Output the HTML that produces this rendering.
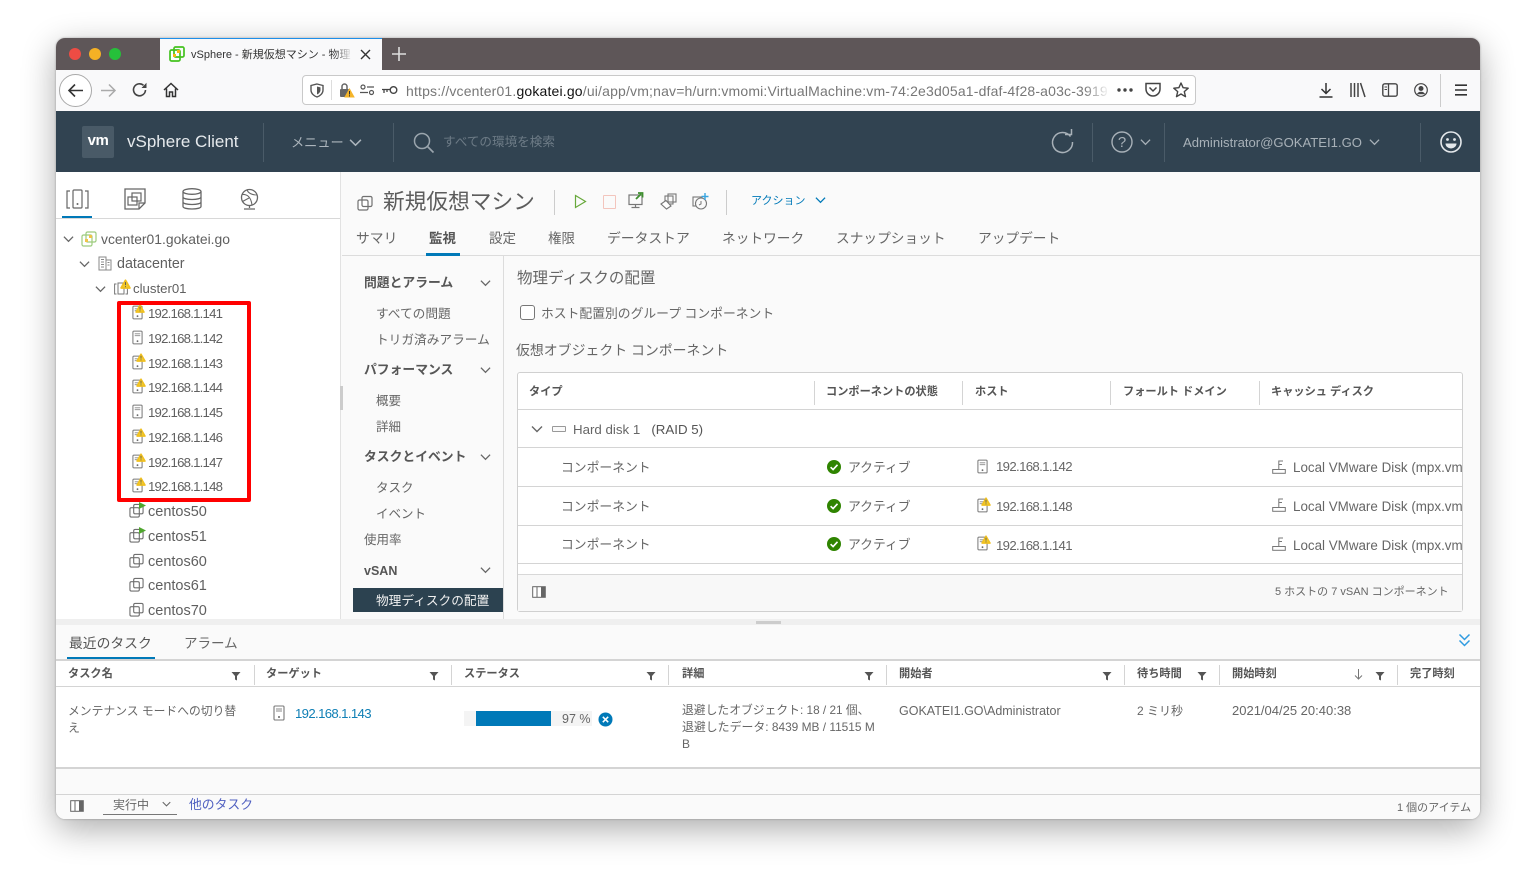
<!DOCTYPE html>
<html lang="ja"><head><meta charset="utf-8"><title>vSphere</title>
<style>
html,body{margin:0;padding:0;width:1536px;height:893px;overflow:hidden;background:#fff}
body{position:relative;font-family:"Liberation Sans","Noto Sans CJK JP",sans-serif;color:#565656;font-size:13px}
.a{position:absolute}
.t{position:absolute;white-space:nowrap;line-height:20px;height:20px;margin-top:1px}
.b{font-weight:700}
svg{position:absolute;overflow:visible}
.ic{fill:none;stroke:#666;stroke-width:1.2}
#win{position:absolute;left:56px;top:38px;width:1424px;height:781px;border-radius:9px;box-shadow:0 10px 34px rgba(0,0,0,.33),0 0 2px rgba(0,0,0,.3);overflow:hidden;background:#fafafa}
.ln{position:absolute;background:#d4d4d4}
.tree{font-size:13px;color:#5f5f5f}
.ip{letter-spacing:-.78px;font-size:13.2px}
.cn{font-size:14.5px}
.th{font-size:11.2px;font-weight:700;color:#555}
.ms{font-size:13px;color:#666}
.tip{letter-spacing:-.65px;font-size:13.2px}
.dk{font-size:13.4px}
</style></head><body>
<svg width="0" height="0" style="position:absolute"><defs>
<symbol id="host" viewBox="0 0 12 16"><rect x="1" y="1" width="10" height="14" rx="1" fill="#fff" stroke="#777" stroke-width="1.1"/><path d="M3 4h6M3 6h6" stroke="#888" stroke-width="1"/><circle cx="6" cy="12" r="1" fill="#666"/></symbol>
<symbol id="warn" viewBox="0 0 12 11"><path d="M6 1.500L10.800 9.800H1.200Z" fill="#f3cb2e" stroke="#f0c020" stroke-width="2" stroke-linejoin="round"/><path d="M6 3.400v3.400M6 7.800v1.200" stroke="#555" stroke-width="1"/></symbol>
<symbol id="vm" viewBox="0 0 16 16"><rect x="1" y="5" width="10" height="10" rx="1.500" fill="#fff" stroke="#707070" stroke-width="1.200"/><rect x="5" y="1.500" width="10" height="10" rx="1.500" fill="none" stroke="#707070" stroke-width="1.200"/></symbol>
<symbol id="chev" viewBox="0 0 12 8"><path d="M1 1.500L6 6.500L11 1.500" fill="none" stroke="currentColor" stroke-width="1.400"/></symbol>
<symbol id="filt" viewBox="0 0 10 10"><path d="M0.500 1H9.500L6 5V9.500L4 8.500V5Z" fill="#555"/></symbol>
<symbol id="ok" viewBox="0 0 14 14"><circle cx="7" cy="7" r="7" fill="#2f8400"/><path d="M3.600 7.200L6.100 9.600L10.500 4.800" fill="none" stroke="#fff" stroke-width="1.600"/></symbol>
<symbol id="disk" viewBox="0 0 14 15"><path d="M.7 10.500H6.800V2H11M6.800 5.500H10" fill="none" stroke="#777" stroke-width="1"/><rect x=".7" y="10.500" width="12.600" height="3.800" fill="#fff" stroke="#777"/></symbol>
<symbol id="cols" viewBox="0 0 14 12"><rect x=".7" y=".7" width="12.600" height="10.600" fill="#fff" stroke="#666"/><path d="M5 1v10" stroke="#666"/><rect x="9" y="1" width="4" height="10" fill="#666"/></symbol>
</defs></svg>

<div id="win">
<!-- title bar -->
<div class="a" style="left:0;top:0;width:1424px;height:32px;background:#5e5658"></div>
<div class="a" style="left:13px;top:10px;width:12px;height:12px;border-radius:50%;background:#ed4c44"></div>
<div class="a" style="left:33px;top:10px;width:12px;height:12px;border-radius:50%;background:#f5b125"></div>
<div class="a" style="left:53px;top:10px;width:12px;height:12px;border-radius:50%;background:#26c03a"></div>
<div class="a" style="left:104px;top:0;width:222px;height:32px;background:#f9f9fa;border-top:1px solid #1e8ee8;box-sizing:border-box"></div>
<svg style="left:113px;top:8px" width="16" height="16" viewBox="0 0 16 16"><rect x="1" y="4" width="10" height="11" rx="1.500" fill="#fff" stroke="#44c21f" stroke-width="1.700"/><rect x="5" y="1" width="10" height="10" rx="1.500" fill="none" stroke="#44c21f" stroke-width="1.700"/><rect x="4" y="8" width="3" height="3" fill="#f4b516"/><rect x="8" y="4" width="3" height="3" fill="#f4b516"/></svg>
<div class="t" style="left:135px;top:6px;font-size:11px;color:#333;width:162px;overflow:hidden">vSphere - 新規仮想マシン - 物理</div>
<div class="a" style="left:277px;top:6px;width:20px;height:20px;background:linear-gradient(90deg,rgba(249,249,250,0),#f9f9fa)"></div>
<svg style="left:304px;top:11px" width="11" height="11"><path d="M1 1L10 10M10 1L1 10" stroke="#333" stroke-width="1.400"/></svg>
<svg style="left:336px;top:9px" width="14" height="14"><path d="M7 0V14M0 7H14" stroke="#ddd" stroke-width="1.600"/></svg>
<!-- toolbar -->
<div class="a" style="left:0;top:32px;width:1424px;height:41px;background:#f9f9fa"></div>
<div class="a" style="left:3px;top:36px;width:33px;height:33px;border-radius:50%;background:#fff;border:1px solid #a9a9a9;box-sizing:border-box"></div>
<svg style="left:11px;top:45px" width="17" height="15"><path d="M16 7.500H2M8 1.500L2 7.500L8 13.500" fill="none" stroke="#333" stroke-width="1.600"/></svg>
<svg style="left:44px;top:45px" width="17" height="15"><path d="M1 7.500H15M9 1.500L15 7.500L9 13.500" fill="none" stroke="#aaa" stroke-width="1.500"/></svg>
<svg style="left:76px;top:44px" width="16" height="16"><path d="M13.500 8A6 6 0 1 1 11.500 3.300" fill="none" stroke="#444" stroke-width="1.600"/><path d="M14.500 .8V6H9.500Z" fill="#444"/></svg>
<svg style="left:107px;top:44px" width="16" height="16"><path d="M1 8L8 1.500L15 8M3.500 6.500V14.500H6.500V10H9.500V14.500H12.500V6.500" fill="none" stroke="#333" stroke-width="1.500"/></svg>
<div class="a" style="left:246px;top:37px;width:894px;height:30px;background:#fff;border:1px solid #c9c9c9;border-radius:4px;box-sizing:border-box"></div>
<svg style="left:254px;top:45px" width="14" height="15"><path d="M7 1L13 2.500V7C13 10.500 10 13 7 14C4 13 1 10.500 1 7V2.500Z" fill="none" stroke="#555" stroke-width="1.400"/><path d="M7 3.500L10.500 4.400V7C10.500 9 9 10.600 7 11.500Z" fill="#555"/></svg>
<div class="a" style="left:275px;top:42px;width:1px;height:20px;background:#ddd"></div>
<svg style="left:283px;top:44px" width="16" height="16"><rect x="1" y="7" width="9" height="8" rx="1" fill="#666"/><path d="M3 7V4.500A2.500 2.500 0 0 1 8 4.500V7" fill="none" stroke="#666" stroke-width="1.500"/><path d="M10.500 6L15.800 15.500H5.200Z" fill="#f5b52a"/><path d="M10.500 9V12.500M10.500 13.200V14.500" stroke="#333"/></svg>
<svg style="left:304px;top:46px" width="14" height="12"><circle cx="3" cy="3" r="2" fill="none" stroke="#555" stroke-width="1.200"/><path d="M7 3H14M0 8.500H8" stroke="#555" stroke-width="1.300"/><circle cx="11.500" cy="8.500" r="2" fill="none" stroke="#555" stroke-width="1.200"/></svg>
<svg style="left:326px;top:47px" width="16" height="10"><circle cx="11.500" cy="5" r="3.300" fill="none" stroke="#444" stroke-width="1.400"/><path d="M0 4.500H8M2 4.500V8M5 4.500V7" stroke="#444" stroke-width="1.300"/></svg>
<div class="t" style="left:350px;top:43px;margin-top:0;font-size:14px;color:#777;width:703px;overflow:hidden;letter-spacing:.17px">https://vcenter01.<span style="color:#111">gokatei.go</span>/ui/app/vm;nav=h/urn:vmomi:VirtualMachine:vm-74:2e3d05a1-dfaf-4f28-a03c-3919</div>
<div class="a" style="left:1028px;top:43px;width:26px;height:20px;background:linear-gradient(90deg,rgba(255,255,255,0),#fff)"></div>
<svg style="left:1061px;top:50px" width="16" height="4"><circle cx="2" cy="2" r="1.700" fill="#444"/><circle cx="8" cy="2" r="1.700" fill="#444"/><circle cx="14" cy="2" r="1.700" fill="#444"/></svg>
<svg style="left:1089px;top:44px" width="16" height="16"><path d="M1 1.500H15V7A7 7 0 0 1 1 7Z" fill="none" stroke="#444" stroke-width="1.500"/><path d="M4.500 5.500L8 9L11.500 5.500" fill="none" stroke="#444" stroke-width="1.500"/></svg>
<svg style="left:1117px;top:44px" width="16" height="16"><path d="M8 1L10.100 5.700L15.200 6.200L11.300 9.600L12.500 14.700L8 12L3.500 14.700L4.700 9.600L.8 6.200L5.900 5.700Z" fill="none" stroke="#444" stroke-width="1.400" stroke-linejoin="round"/></svg>
<svg style="left:1262px;top:44px" width="16" height="16"><path d="M8 1V11M3.500 7L8 11.500L12.500 7M1.500 15H14.500" fill="none" stroke="#333" stroke-width="1.500"/></svg>
<svg style="left:1294px;top:45px" width="16" height="14"><path d="M1 0V14M4.500 0V14M8 0V14M10.500 0L15 14" stroke="#444" stroke-width="1.500"/></svg>
<svg style="left:1326px;top:45px" width="16" height="14"><rect x=".8" y=".8" width="14.400" height="12.400" rx="2" fill="none" stroke="#444" stroke-width="1.400"/><path d="M6.500 1V13" stroke="#444" stroke-width="1.300"/><path d="M2.500 4H5M2.500 6.500H5" stroke="#444"/></svg>
<svg style="left:1358px;top:45px" width="14" height="14"><circle cx="7" cy="7" r="6.300" fill="none" stroke="#444" stroke-width="1.200"/><circle cx="7" cy="5.500" r="2.500" fill="#444"/><path d="M2.800 11.300A4.500 4 0 0 1 11.200 11.300" fill="#444"/></svg>
<div class="a" style="left:1384px;top:36px;width:1px;height:33px;background:#ccc"></div>
<svg style="left:1399px;top:46px" width="12" height="12"><path d="M0 1.200H12M0 6H12M0 10.800H12" stroke="#333" stroke-width="1.600"/></svg>
<!-- header -->
<div class="a" style="left:0;top:73px;width:1424px;height:61px;background:#314351"></div>
<div class="a" style="left:26px;top:88px;width:32px;height:32px;border-radius:2px;background:#495a67"></div>
<div class="t b" style="left:26px;top:92px;width:32px;text-align:center;color:#fff;font-size:15px;letter-spacing:-.5px">vm</div>
<div class="t" style="left:71px;top:93px;font-size:17px;color:#e5e9ec">vSphere Client</div>
<div class="a" style="left:207px;top:85px;width:1px;height:39px;background:#4a5b68"></div>
<div class="t" style="left:235px;top:94px;font-size:13.200px;color:#acb5bc">メニュー</div>
<svg style="left:293px;top:100px;color:#acb5bc" width="13" height="9"><use href="#chev" width="13" height="9"/></svg>
<div class="a" style="left:337px;top:85px;width:1px;height:39px;background:#4a5b68"></div>
<svg style="left:357px;top:94px" width="22" height="22"><circle cx="9" cy="9" r="7.500" fill="none" stroke="#9aa5ad" stroke-width="1.500"/><path d="M14.500 14.500L20.500 20.500" stroke="#9aa5ad" stroke-width="1.700"/></svg>
<div class="t" style="left:387px;top:93px;font-size:12.600px;color:#6d7b86">すべての環境を検索</div>
<svg style="left:994px;top:91px" width="24" height="24"><path d="M20.500 7.500A10 10 0 1 0 22.500 13" fill="none" stroke="#a8b1b8" stroke-width="1.500"/><path d="M15 5.500H21.500V0" fill="none" stroke="#a8b1b8" stroke-width="1.500"/></svg>
<div class="a" style="left:1036px;top:85px;width:1px;height:39px;background:#4a5b68"></div>
<svg style="left:1055px;top:93px" width="22" height="22"><circle cx="11" cy="11" r="10" fill="none" stroke="#a8b1b8" stroke-width="1.400"/></svg>
<div class="t" style="left:1055px;top:94px;width:22px;text-align:center;color:#a8b1b8;font-size:15px">?</div>
<svg style="left:1084px;top:100px;color:#a8b1b8" width="11" height="8"><use href="#chev" width="11" height="8"/></svg>
<div class="a" style="left:1108px;top:85px;width:1px;height:39px;background:#4a5b68"></div>
<div class="t" style="left:1127px;top:94px;font-size:13.100px;color:#a8b1b8">Administrator@GOKATEI1.GO</div>
<svg style="left:1313px;top:100px;color:#a8b1b8" width="11" height="8"><use href="#chev" width="11" height="8"/></svg>
<div class="a" style="left:1364px;top:85px;width:1px;height:39px;background:#4a5b68"></div>
<svg style="left:1384px;top:93px" width="22" height="22"><circle cx="11" cy="11" r="10" fill="none" stroke="#e4e8eb" stroke-width="1.600"/><circle cx="7.500" cy="8.500" r="1.400" fill="#e4e8eb"/><circle cx="14.500" cy="8.500" r="1.400" fill="#e4e8eb"/><path d="M5.500 12.500H16.500A5.500 5 0 0 1 5.500 12.500Z" fill="#e4e8eb"/></svg>

<!-- left nav panel -->
<div class="a" style="left:0;top:134px;width:284px;height:447px;background:#fff"></div>
<div class="a" style="left:284px;top:134px;width:1px;height:447px;background:#e2e2e2"></div>
<div class="a" style="left:284px;top:348px;width:3px;height:24px;background:#ccc"></div>
<svg style="left:10px;top:151px" width="23" height="21"><path d="M4 2H1V19H4M19 2H22V19H19" fill="none" stroke="#666" stroke-width="1.200"/><rect x="7" y="1" width="9" height="18" rx="1" fill="none" stroke="#666" stroke-width="1.200"/><circle cx="11.500" cy="15" r="1" fill="#666"/></svg>
<svg style="left:68px;top:150px" width="22" height="22"><path d="M1 1H21V15L15 21H1Z" fill="none" stroke="#666" stroke-width="1.300"/><path d="M15 21V15H21" fill="none" stroke="#666" stroke-width="1.200"/><rect x="4" y="9" width="9" height="8" fill="none" stroke="#666" stroke-width="1.200"/><rect x="8" y="5" width="9" height="8" fill="none" stroke="#666" stroke-width="1.200"/></svg>
<svg style="left:126px;top:150px" width="20" height="22"><ellipse cx="10" cy="3.500" rx="9" ry="2.800" fill="none" stroke="#666" stroke-width="1.300"/><path d="M1 3.500V18.500C1 20 5 21 10 21S19 20 19 18.500V3.500M1 9C1 10.500 5 11.500 10 11.500S19 10.500 19 9M1 14C1 15.500 5 16.500 10 16.500S19 15.500 19 14" fill="none" stroke="#666" stroke-width="1.300"/></svg>
<svg style="left:183px;top:151px" width="21" height="21"><circle cx="10.500" cy="8.500" r="8" fill="none" stroke="#666" stroke-width="1.300"/><path d="M3 5.500C8 5 12 8 13 16M8 .8C9 4 13 6 18 6M3.500 12.500L10 9" fill="none" stroke="#666" stroke-width="1.100"/><path d="M10.500 16.500V19M5 20H16" stroke="#666" stroke-width="1.300"/></svg>
<div class="a" style="left:6px;top:178px;width:30px;height:3px;background:#0079b8"></div>
<div class="a" style="left:0;top:180px;width:284px;height:1px;background:#d8d8d8"></div>

<svg style="left:7px;top:197px;color:#666" width="11" height="8"><use href="#chev" width="11" height="8"/></svg>
<svg style="left:25px;top:193px" width="16" height="16"><rect x="1" y="4" width="10" height="11" rx="1.500" fill="#fff" stroke="#9ccb7d" stroke-width="1.200"/><rect x="5" y="1" width="10" height="10" rx="1.500" fill="none" stroke="#9ccb7d" stroke-width="1.200"/><rect x="4" y="8" width="3" height="3" fill="#f0c348"/><rect x="8" y="4" width="3" height="3" fill="#f0c348"/></svg>
<div class="t tree" style="left:45px;top:190px;font-size:13.900px">vcenter01.gokatei.go</div>
<svg style="left:23px;top:222px;color:#666" width="11" height="8"><use href="#chev" width="11" height="8"/></svg>
<svg style="left:42px;top:218px" width="14" height="15"><rect x="1" y="1" width="7" height="13" fill="none" stroke="#888"/><rect x="8" y="4" width="5" height="10" fill="none" stroke="#888"/><path d="M3 3.500h3M3 6h3M3 8.500h3M3 11h3M9.500 6.500h2M9.500 9h2" stroke="#888"/></svg>
<div class="t tree" style="left:61px;top:215px;font-size:14.300px">datacenter</div>
<svg style="left:39px;top:247px;color:#666" width="11" height="8"><use href="#chev" width="11" height="8"/></svg>
<svg style="left:58px;top:243px" width="14" height="14"><path d="M2.500 3H.6V13H2.500M11.500 3H13.400V13H11.500" fill="none" stroke="#777"/><rect x="4" y="2" width="6" height="11" fill="none" stroke="#777"/></svg>
<svg style="left:64px;top:241px" width="11" height="10"><use href="#warn" width="11" height="10"/></svg>
<div class="t tree" style="left:77px;top:240px;font-size:13.200px">cluster01</div>

<svg style="left:76px;top:267px" width="11" height="15"><use href="#host" width="11" height="15"/></svg><svg style="left:79px;top:266px" width="10" height="9"><use href="#warn" width="10" height="9"/></svg><div class="t tree ip" style="left:92px;top:265px">192.168.1.141</div>
<svg style="left:76px;top:292px" width="11" height="15"><use href="#host" width="11" height="15"/></svg><div class="t tree ip" style="left:92px;top:290px">192.168.1.142</div>
<svg style="left:76px;top:317px" width="11" height="15"><use href="#host" width="11" height="15"/></svg><svg style="left:80px;top:315px" width="10" height="9"><use href="#warn" width="10" height="9"/></svg><div class="t tree ip" style="left:92px;top:315px">192.168.1.143</div>
<svg style="left:76px;top:341px" width="11" height="15"><use href="#host" width="11" height="15"/></svg><svg style="left:80px;top:340px" width="10" height="9"><use href="#warn" width="10" height="9"/></svg><div class="t tree ip" style="left:92px;top:339px">192.168.1.144</div>
<svg style="left:76px;top:366px" width="11" height="15"><use href="#host" width="11" height="15"/></svg><div class="t tree ip" style="left:92px;top:364px">192.168.1.145</div>
<svg style="left:76px;top:391px" width="11" height="15"><use href="#host" width="11" height="15"/></svg><svg style="left:80px;top:390px" width="10" height="9"><use href="#warn" width="10" height="9"/></svg><div class="t tree ip" style="left:92px;top:389px">192.168.1.146</div>
<svg style="left:76px;top:416px" width="11" height="15"><use href="#host" width="11" height="15"/></svg><svg style="left:80px;top:415px" width="10" height="9"><use href="#warn" width="10" height="9"/></svg><div class="t tree ip" style="left:92px;top:414px">192.168.1.147</div>
<svg style="left:76px;top:440px" width="11" height="15"><use href="#host" width="11" height="15"/></svg><svg style="left:80px;top:439px" width="10" height="9"><use href="#warn" width="10" height="9"/></svg><div class="t tree ip" style="left:92px;top:438px">192.168.1.148</div>

<div class="a" style="left:61px;top:263px;width:134px;height:201px;border:4px solid #f00;border-radius:2px;box-sizing:border-box"></div>

<svg style="left:73px;top:465px" width="15" height="15"><use href="#vm" width="15" height="15"/></svg><svg style="left:83px;top:464px" width="7" height="7"><path d="M0 0L7 3.500L0 7Z" fill="#4fa62e"/></svg><div class="t tree cn" style="left:92px;top:463px">centos50</div>
<svg style="left:73px;top:490px" width="15" height="15"><use href="#vm" width="15" height="15"/></svg><svg style="left:83px;top:489px" width="7" height="7"><path d="M0 0L7 3.500L0 7Z" fill="#4fa62e"/></svg><div class="t tree cn" style="left:92px;top:488px">centos51</div>
<svg style="left:73px;top:515px" width="15" height="15"><use href="#vm" width="15" height="15"/></svg><div class="t tree cn" style="left:92px;top:513px">centos60</div>
<svg style="left:73px;top:539px" width="15" height="15"><use href="#vm" width="15" height="15"/></svg><div class="t tree cn" style="left:92px;top:537px">centos61</div>
<svg style="left:73px;top:564px" width="15" height="15"><use href="#vm" width="15" height="15"/></svg><div class="t tree cn" style="left:92px;top:562px">centos70</div>

<!-- object header -->
<svg style="left:301px;top:157px" width="16" height="16"><use href="#vm" width="16" height="16"/></svg>
<div class="t" style="left:327px;top:152px;font-size:21.700px;line-height:22px;height:22px;color:#5c5c5c">新規仮想マシン</div>
<div class="a" style="left:498px;top:152px;width:1px;height:25px;background:#ccc"></div>
<svg style="left:518px;top:156px" width="13" height="15"><path d="M1.500 1.500L11.500 7.500L1.500 13.500Z" fill="none" stroke="#67a83a" stroke-width="1.200"/></svg>
<div class="a" style="left:547px;top:157px;width:11px;height:12px;border:1px solid #f3c5bd;border-radius:1px"></div>
<svg style="left:572px;top:154px" width="18" height="17"><rect x="1" y="3" width="13" height="9.500" fill="none" stroke="#777" stroke-width="1.200"/><path d="M7.500 12.500V15M3.500 15.500H11.500" stroke="#777" stroke-width="1.200"/><path d="M8 7L13 2M10 1H14.500V5.500" fill="none" stroke="#3e8e2e" stroke-width="1.800"/></svg>
<svg style="left:604px;top:155px" width="17" height="17"><rect x="5" y="3" width="8" height="8" fill="none" stroke="#777" stroke-width="1.100"/><rect x="8" y="1" width="8" height="8" fill="none" stroke="#777" stroke-width="1.100"/><path d="M1 11L6 7.500L11 13L6.500 16Z" fill="#fff" stroke="#777" stroke-width="1.100"/></svg>
<svg style="left:636px;top:155px" width="17" height="17"><rect x="1" y="4" width="9" height="9" fill="none" stroke="#777" stroke-width="1.100"/><circle cx="9" cy="10.500" r="5.500" fill="#fafafa" stroke="#777" stroke-width="1.100"/><path d="M9 8V11L7 12" fill="none" stroke="#777"/><path d="M13 0V7M9.500 3.500H16.500" stroke="#38a5e0" stroke-width="1.400"/></svg>
<div class="a" style="left:670px;top:152px;width:1px;height:25px;background:#ccc"></div>
<div class="t" style="left:695px;top:152px;font-size:11px;color:#0079b8">アクション</div>
<svg style="left:759px;top:158px;color:#0079b8" width="11" height="8"><use href="#chev" width="11" height="8"/></svg>

<!-- tabs -->
<div class="t ms" style="left:300px;top:190px;font-size:13.800px">サマリ</div>
<div class="t ms" style="left:373px;top:190px;font-size:13.500px;font-weight:700;color:#555">監視</div>
<div class="t ms" style="left:433px;top:190px;font-size:13.500px">設定</div>
<div class="t ms" style="left:492px;top:190px;font-size:13.500px">権限</div>
<div class="t ms" style="left:551px;top:190px;font-size:13.800px">データストア</div>
<div class="t ms" style="left:666px;top:190px;font-size:13.700px">ネットワーク</div>
<div class="t ms" style="left:780px;top:190px;font-size:13.700px">スナップショット</div>
<div class="t ms" style="left:922px;top:190px;font-size:13.700px">アップデート</div>
<div class="a" style="left:286px;top:217px;width:1138px;height:1px;background:#dcdcdc"></div>
<div class="a" style="left:370px;top:215px;width:34px;height:3px;background:#0079b8"></div>

<!-- sub nav -->
<div class="a" style="left:447px;top:218px;width:1px;height:363px;background:#dcdcdc"></div>
<div class="t b" style="left:308px;top:234px;font-size:12.800px;color:#565656">問題とアラーム</div>
<svg style="left:424px;top:241px;color:#666" width="11" height="8"><use href="#chev" width="11" height="8"/></svg>
<div class="t ms" style="left:320px;top:265px;font-size:12.700px">すべての問題</div>
<div class="t ms" style="left:320px;top:291px;font-size:12.700px">トリガ済みアラーム</div>
<div class="t b" style="left:308px;top:321px;font-size:12.800px;color:#565656">パフォーマンス</div>
<svg style="left:424px;top:328px;color:#666" width="11" height="8"><use href="#chev" width="11" height="8"/></svg>
<div class="t ms" style="left:320px;top:352px;font-size:12.500px">概要</div>
<div class="t ms" style="left:320px;top:378px;font-size:12.500px">詳細</div>
<div class="t b" style="left:308px;top:408px;font-size:12.800px;color:#565656">タスクとイベント</div>
<svg style="left:424px;top:415px;color:#666" width="11" height="8"><use href="#chev" width="11" height="8"/></svg>
<div class="t ms" style="left:320px;top:439px;font-size:12.500px">タスク</div>
<div class="t ms" style="left:320px;top:465px;font-size:12.500px">イベント</div>
<div class="t ms" style="left:308px;top:491px;font-size:12.500px">使用率</div>
<div class="t b" style="left:308px;top:522px;font-size:12.500px;color:#565656">vSAN</div>
<svg style="left:424px;top:528px;color:#666" width="11" height="8"><use href="#chev" width="11" height="8"/></svg>
<div class="a" style="left:297px;top:550px;width:150px;height:24px;background:#2c4250"></div>
<div class="t" style="left:320px;top:552px;font-size:12.700px;color:#f0f0f0">物理ディスクの配置</div>

<!-- main -->
<div class="t" style="left:461px;top:230px;font-size:15.500px;color:#666">物理ディスクの配置</div>
<div class="a" style="left:464px;top:267px;width:15px;height:15px;border:1px solid #777;border-radius:3px;background:#fff;box-sizing:border-box"></div>
<div class="t ms" style="left:485px;top:265px;font-size:12.800px">ホスト配置別のグループ コンポーネント</div>
<div class="t ms" style="left:460px;top:301px;font-size:13.900px">仮想オブジェクト コンポーネント</div>

<!-- table -->
<div class="a" style="left:461px;top:334px;width:946px;height:240px;background:#fff;border:1px solid #d0d0d0;border-radius:3px;box-sizing:border-box"></div>
<div class="t th" style="left:473px;top:343px">タイプ</div>
<div class="ln" style="left:758px;top:343px;width:1px;height:24px"></div>
<div class="t th" style="left:770px;top:343px">コンポーネントの状態</div>
<div class="ln" style="left:906px;top:343px;width:1px;height:24px"></div>
<div class="t th" style="left:919px;top:343px">ホスト</div>
<div class="ln" style="left:1054px;top:343px;width:1px;height:24px"></div>
<div class="t th" style="left:1067px;top:343px">フォールト ドメイン</div>
<div class="ln" style="left:1203px;top:343px;width:1px;height:24px"></div>
<div class="t th" style="left:1215px;top:343px">キャッシュ ディスク</div>
<div class="ln" style="left:462px;top:371px;width:944px;height:1px"></div>
<svg style="left:475px;top:387px;color:#666" width="12" height="8"><use href="#chev" width="12" height="8"/></svg>
<svg style="left:496px;top:388px" width="14" height="6"><rect x=".5" y=".5" width="13" height="5" rx=".5" fill="#fafafa" stroke="#999"/></svg>
<div class="t" style="left:517px;top:381px;font-size:13.300px;color:#666">Hard disk 1 &nbsp; <span style="color:#555">(RAID 5)</span></div>
<div class="ln" style="left:462px;top:409px;width:944px;height:1px"></div>
<div class="ln" style="left:462px;top:448px;width:944px;height:1px"></div>
<div class="ln" style="left:462px;top:487px;width:944px;height:1px"></div>
<div class="ln" style="left:462px;top:525px;width:944px;height:1px"></div>
<div class="a" style="left:462px;top:536px;width:944px;height:37px;background:#f8f8f8;border-top:1px solid #d8d8d8;box-sizing:border-box"></div>

<div class="t ms" style="left:505px;top:419px;font-size:12.800px">コンポーネント</div>
<svg style="left:771px;top:422px" width="14" height="14"><use href="#ok" width="14" height="14"/></svg>
<div class="t ms" style="left:792px;top:419px;font-size:12.800px">アクティブ</div>
<svg style="left:921px;top:421px" width="11" height="15"><use href="#host" width="11" height="15"/></svg>
<div class="t ms tip" style="left:940px;top:418px">192.168.1.142</div>
<svg style="left:1216px;top:421px" width="14" height="15"><use href="#disk" width="14" height="15"/></svg>
<div class="t ms dk" style="left:1237px;top:419px;width:169px;overflow:hidden">Local VMware Disk (mpx.vmhba0</div>

<div class="t ms" style="left:505px;top:458px;font-size:12.800px">コンポーネント</div>
<svg style="left:771px;top:461px" width="14" height="14"><use href="#ok" width="14" height="14"/></svg>
<div class="t ms" style="left:792px;top:458px;font-size:12.800px">アクティブ</div>
<svg style="left:921px;top:460px" width="11" height="15"><use href="#host" width="11" height="15"/></svg><svg style="left:925px;top:459px" width="10" height="9"><use href="#warn" width="10" height="9"/></svg>
<div class="t ms tip" style="left:940px;top:458px">192.168.1.148</div>
<svg style="left:1216px;top:459px" width="14" height="15"><use href="#disk" width="14" height="15"/></svg>
<div class="t ms dk" style="left:1237px;top:458px;width:169px;overflow:hidden">Local VMware Disk (mpx.vmhba0</div>

<div class="t ms" style="left:505px;top:496px;font-size:12.800px">コンポーネント</div>
<svg style="left:771px;top:499px" width="14" height="14"><use href="#ok" width="14" height="14"/></svg>
<div class="t ms" style="left:792px;top:496px;font-size:12.800px">アクティブ</div>
<svg style="left:921px;top:498px" width="11" height="15"><use href="#host" width="11" height="15"/></svg><svg style="left:925px;top:497px" width="10" height="9"><use href="#warn" width="10" height="9"/></svg>
<div class="t ms tip" style="left:940px;top:497px">192.168.1.141</div>
<svg style="left:1216px;top:498px" width="14" height="15"><use href="#disk" width="14" height="15"/></svg>
<div class="t ms dk" style="left:1237px;top:497px;width:169px;overflow:hidden">Local VMware Disk (mpx.vmhba0</div>

<svg style="left:476px;top:548px" width="14" height="12"><use href="#cols" width="14" height="12"/></svg>
<div class="t" style="left:1219px;top:543px;font-size:11px;color:#666">5 ホストの 7 vSAN コンポーネント</div>

<!-- splitter -->
<div class="a" style="left:0;top:581px;width:1424px;height:6px;background:#efefef"></div>
<div class="a" style="left:700px;top:583px;width:25px;height:3px;background:#ccc"></div>

<!-- tasks -->
<div class="a" style="left:0;top:587px;width:1424px;height:35px;background:#fafafa"></div>
<div class="t" style="left:13px;top:595px;font-size:13.800px;color:#555">最近のタスク</div>
<div class="t" style="left:128px;top:595px;font-size:13.500px;color:#666">アラーム</div>
<div class="a" style="left:11px;top:619px;width:88px;height:3px;background:#0079b8"></div>
<svg style="left:1402px;top:595px" width="13" height="15"><path d="M1.500 1.500L6.500 6.500L11.500 1.500M1.500 7.500L6.500 12.500L11.500 7.500" fill="none" stroke="#2f9be0" stroke-width="1.500"/></svg>
<div class="a" style="left:0;top:621px;width:1424px;height:2px;background:#d4d4d4"></div>
<div class="a" style="left:0;top:623px;width:1424px;height:107px;background:#fff"></div>

<div class="t th" style="left:12px;top:625px">タスク名</div><svg style="left:175px;top:633px" width="10" height="10"><use href="#filt" width="10" height="10"/></svg>
<div class="ln" style="left:198px;top:627px;width:1px;height:20px"></div>
<div class="t th" style="left:210px;top:625px">ターゲット</div><svg style="left:373px;top:633px" width="10" height="10"><use href="#filt" width="10" height="10"/></svg>
<div class="ln" style="left:395px;top:627px;width:1px;height:20px"></div>
<div class="t th" style="left:408px;top:625px">ステータス</div><svg style="left:590px;top:633px" width="10" height="10"><use href="#filt" width="10" height="10"/></svg>
<div class="ln" style="left:612px;top:627px;width:1px;height:20px"></div>
<div class="t th" style="left:626px;top:625px">詳細</div><svg style="left:808px;top:633px" width="10" height="10"><use href="#filt" width="10" height="10"/></svg>
<div class="ln" style="left:830px;top:627px;width:1px;height:20px"></div>
<div class="t th" style="left:843px;top:625px">開始者</div><svg style="left:1046px;top:633px" width="10" height="10"><use href="#filt" width="10" height="10"/></svg>
<div class="ln" style="left:1068px;top:627px;width:1px;height:20px"></div>
<div class="t th" style="left:1081px;top:625px">待ち時間</div><svg style="left:1141px;top:633px" width="10" height="10"><use href="#filt" width="10" height="10"/></svg>
<div class="ln" style="left:1163px;top:627px;width:1px;height:20px"></div>
<div class="t th" style="left:1176px;top:625px">開始時刻</div>
<svg style="left:1298px;top:631px" width="9" height="11"><path d="M4.500 0V10M1 6.500L4.500 10L8 6.500" fill="none" stroke="#777"/></svg>
<svg style="left:1319px;top:633px" width="10" height="10"><use href="#filt" width="10" height="10"/></svg>
<div class="ln" style="left:1341px;top:627px;width:1px;height:20px"></div>
<div class="t th" style="left:1354px;top:625px">完了時刻</div>
<div class="a" style="left:0;top:648px;width:1424px;height:1px;background:#d4d4d4"></div>

<div class="t" style="left:12px;top:662px;font-size:11.800px;color:#666">メンテナンス モードへの切り替</div>
<div class="t" style="left:12px;top:679px;font-size:12px;color:#666">え</div>
<svg style="left:217px;top:667px" width="12" height="16"><use href="#host" width="12" height="16"/></svg>
<div class="t tip" style="left:239px;top:665px;color:#0f7fb5">192.168.1.143</div>
<div class="a" style="left:408px;top:673px;width:128px;height:15px;background:#f4f4f4"></div>
<div class="a" style="left:420px;top:673px;width:75px;height:15px;background:#0079b8"></div>
<div class="t" style="left:506px;top:670px;font-size:12.500px;color:#666">97 %</div>
<svg style="left:542px;top:674px" width="15" height="15"><circle cx="7.500" cy="7.500" r="7" fill="#0079b8"/><path d="M4.800 4.800L10.200 10.200M10.200 4.800L4.800 10.200" stroke="#fff" stroke-width="1.500"/></svg>
<div class="t" style="left:626px;top:661px;font-size:11.800px;color:#666">退避したオブジェクト: 18 / 21 個、</div>
<div class="t" style="left:626px;top:678px;font-size:11.900px;color:#666">退避したデータ: 8439 MB / 11515 M</div>
<div class="t" style="left:626px;top:695px;font-size:12px;color:#666">B</div>
<div class="t" style="left:843px;top:662px;font-size:12.500px;color:#666">GOKATEI1.GO\Administrator</div>
<div class="t" style="left:1081px;top:662px;font-size:12px;color:#666">2 ミリ秒</div>
<div class="t" style="left:1176px;top:662px;font-size:13px;color:#666">2021/04/25 20:40:38</div>
<div class="a" style="left:0;top:729px;width:1424px;height:2px;background:#d4d4d4"></div>
<div class="a" style="left:0;top:756px;width:1424px;height:1px;background:#d4d4d4"></div>
<div class="a" style="left:0;top:757px;width:1424px;height:24px;background:#fafafa"></div>
<svg style="left:14px;top:762px" width="14" height="12"><use href="#cols" width="14" height="12"/></svg>
<div class="t" style="left:57px;top:756px;font-size:12px;color:#666">実行中</div>
<svg style="left:106px;top:763px;color:#666" width="9" height="6"><use href="#chev" width="9" height="6"/></svg>
<div class="a" style="left:47px;top:776px;width:74px;height:1px;background:#777"></div>
<div class="t" style="left:133px;top:756px;font-size:12.800px;color:#4f5fc0">他のタスク</div>
<div class="t" style="left:1341px;top:759px;font-size:11px;color:#666">1 個のアイテム</div>
</div>
</body></html>
